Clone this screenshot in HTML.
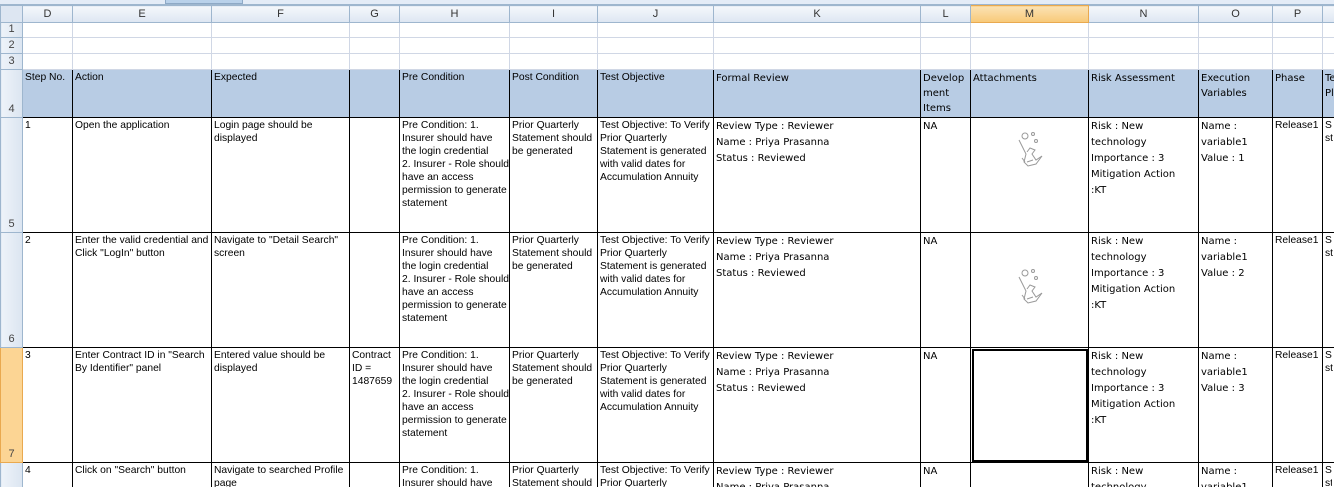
<!DOCTYPE html>
<html><head><meta charset="utf-8"><style>
*{margin:0;padding:0;box-sizing:border-box}
html,body{width:1334px;height:487px;overflow:hidden}
body{background:#fff;position:relative;font-family:"Liberation Sans",sans-serif}
.top{position:absolute;left:0;top:0;width:1334px;height:5px;background:#e4ecf7;border-bottom:1px solid #9eb6ce}
.tab{position:absolute;left:165px;top:0;width:78px;height:4px;background:#b9d1ea;border:1px solid #8ea9c6;border-top:none}
table{position:absolute;left:0;top:5px;border-collapse:collapse;table-layout:fixed;width:1334px}
td{overflow:hidden;white-space:nowrap;vertical-align:top;font-size:10.3px;line-height:13px;padding:1px 2px 0;border:1px solid #d0d7e5}
tr.ch td{background:linear-gradient(#f4f7fb,#dde6f2);color:#333;text-align:center;font-size:11px;line-height:15px;border-color:#9eb6ce;vertical-align:middle;padding:0}
td.rh{background:linear-gradient(90deg,#eef3f9,#dbe5f1);color:#444;text-align:center;vertical-align:bottom;font-size:11px;border-color:#9eb6ce;padding:0 0 1px 0}
td.rh.sel{background:#fcd594;border-color:#e9a94f}
tr.ch td.sel{background:linear-gradient(#fbe2b4,#f8c978);border-color:#e9a94f}
tr.d td:not(.rh){border:1px solid #000}
tr.h td:not(.rh){background:#b8cce4;padding-top:1px}
tr.h td.v{line-height:15px}
.v{font-family:"DejaVu Sans",sans-serif;font-size:10px;line-height:16px}
td.selc{outline:2px solid #000;outline-offset:-3px}
tr.last td{height:24px;max-height:24px}
</style></head><body>
<div class="top"></div><div class="tab"></div>
<table>
<colgroup><col style="width:22px"><col style="width:50px"><col style="width:139px"><col style="width:138px"><col style="width:50px"><col style="width:110px"><col style="width:88px"><col style="width:116px"><col style="width:207px"><col style="width:50px"><col style="width:118px"><col style="width:110px"><col style="width:74px"><col style="width:50px"><col style="width:12px"></colgroup>
<tr class="ch" style="height:17px"><td style="background:#dde6f2"></td><td>D</td><td>E</td><td>F</td><td>G</td><td>H</td><td>I</td><td>J</td><td>K</td><td>L</td><td class="sel">M</td><td>N</td><td>O</td><td>P</td><td></td></tr>
<tr style="height:15px"><td class="rh">1</td><td></td><td></td><td></td><td></td><td></td><td></td><td></td><td></td><td></td><td></td><td></td><td></td><td></td><td></td></tr>
<tr style="height:16px"><td class="rh">2</td><td></td><td></td><td></td><td></td><td></td><td></td><td></td><td></td><td></td><td></td><td></td><td></td><td></td><td></td></tr>
<tr style="height:16px"><td class="rh">3</td><td></td><td></td><td></td><td></td><td></td><td></td><td></td><td></td><td></td><td></td><td></td><td></td><td></td><td></td></tr>
<tr class="d h" style="height:48px"><td class="rh">4</td><td>Step No.</td><td>Action</td><td>Expected</td><td></td><td>Pre Condition</td><td>Post Condition</td><td>Test Objective</td><td class="v">Formal Review</td><td class="v">Develop<br>ment<br>Items</td><td class="v">Attachments</td><td class="v">Risk Assessment</td><td class="v">Execution<br>Variables</td><td class="v">Phase</td><td class="v">Te<br>Pl</td></tr>
<tr class="d" style="height:115px"><td class="rh">5</td><td>1</td><td>Open the application</td><td>Login page should be<br>displayed</td><td></td><td>Pre Condition: 1.<br>Insurer should have<br>the login credential<br>2. Insurer - Role should<br>have an access<br>permission to generate<br>statement</td><td>Prior Quarterly<br>Statement should<br>be generated</td><td>Test Objective: To Verify<br>Prior Quarterly<br>Statement is generated<br>with valid dates for<br>Accumulation Annuity</td><td class="v">Review Type : Reviewer<br>Name : Priya Prasanna<br>Status : Reviewed</td><td class="v">NA</td><td style="text-align:center;padding-top:12px"><svg width="34" height="40" viewBox="0 0 34 40" fill="none" stroke="#999" stroke-width="1"><circle cx="12" cy="6" r="3"/><circle cx="20" cy="4" r="1.5"/><circle cx="23" cy="11" r="1.5"/><path d="M6 10l4 8 3 6-2 8 4 4 8-2 6-8-6 4-4-6 3-4-5-2-3 4"/><path d="M9 28l3 4M14 32l6-2"/></svg></td><td class="v">Risk : New<br>technology<br>Importance : 3<br>Mitigation Action<br>:KT</td><td class="v">Name :<br>variable1<br>Value : 1</td><td>Release1</td><td>S<br>st</td></tr>
<tr class="d" style="height:115px"><td class="rh">6</td><td>2</td><td>Enter the valid credential and<br>Click "LogIn" button</td><td>Navigate to "Detail Search"<br>screen</td><td></td><td>Pre Condition: 1.<br>Insurer should have<br>the login credential<br>2. Insurer - Role should<br>have an access<br>permission to generate<br>statement</td><td>Prior Quarterly<br>Statement should<br>be generated</td><td>Test Objective: To Verify<br>Prior Quarterly<br>Statement is generated<br>with valid dates for<br>Accumulation Annuity</td><td class="v">Review Type : Reviewer<br>Name : Priya Prasanna<br>Status : Reviewed</td><td class="v">NA</td><td style="text-align:center;padding-top:34px"><svg width="34" height="40" viewBox="0 0 34 40" fill="none" stroke="#999" stroke-width="1"><circle cx="12" cy="6" r="3"/><circle cx="20" cy="4" r="1.5"/><circle cx="23" cy="11" r="1.5"/><path d="M6 10l4 8 3 6-2 8 4 4 8-2 6-8-6 4-4-6 3-4-5-2-3 4"/><path d="M9 28l3 4M14 32l6-2"/></svg></td><td class="v">Risk : New<br>technology<br>Importance : 3<br>Mitigation Action<br>:KT</td><td class="v">Name :<br>variable1<br>Value : 2</td><td>Release1</td><td>S<br>st</td></tr>
<tr class="d" style="height:115px"><td class="rh sel">7</td><td>3</td><td>Enter Contract ID in "Search<br>By Identifier" panel</td><td>Entered value should be<br>displayed</td><td>Contract<br>ID =<br>1487659</td><td>Pre Condition: 1.<br>Insurer should have<br>the login credential<br>2. Insurer - Role should<br>have an access<br>permission to generate<br>statement</td><td>Prior Quarterly<br>Statement should<br>be generated</td><td>Test Objective: To Verify<br>Prior Quarterly<br>Statement is generated<br>with valid dates for<br>Accumulation Annuity</td><td class="v">Review Type : Reviewer<br>Name : Priya Prasanna<br>Status : Reviewed</td><td class="v">NA</td><td class="selc"></td><td class="v">Risk : New<br>technology<br>Importance : 3<br>Mitigation Action<br>:KT</td><td class="v">Name :<br>variable1<br>Value : 3</td><td>Release1</td><td>S<br>st</td></tr>
<tr class="d last"><td class="rh"></td><td><div style="height:23px;overflow:hidden">4</div></td><td><div style="height:23px;overflow:hidden">Click on "Search" button</div></td><td><div style="height:23px;overflow:hidden">Navigate to searched Profile<br>page</div></td><td></td><td><div style="height:23px;overflow:hidden">Pre Condition: 1.<br>Insurer should have</div></td><td><div style="height:23px;overflow:hidden">Prior Quarterly<br>Statement should</div></td><td><div style="height:23px;overflow:hidden">Test Objective: To Verify<br>Prior Quarterly</div></td><td class="v"><div style="height:23px;overflow:hidden">Review Type : Reviewer<br>Name : Priya Prasanna</div></td><td class="v">NA</td><td></td><td class="v"><div style="height:23px;overflow:hidden">Risk : New<br>technology</div></td><td class="v"><div style="height:23px;overflow:hidden">Name :<br>variable1</div></td><td>Release1</td><td><div style="height:23px;overflow:hidden">S<br>st</div></td></tr>
</table>
</body></html>
